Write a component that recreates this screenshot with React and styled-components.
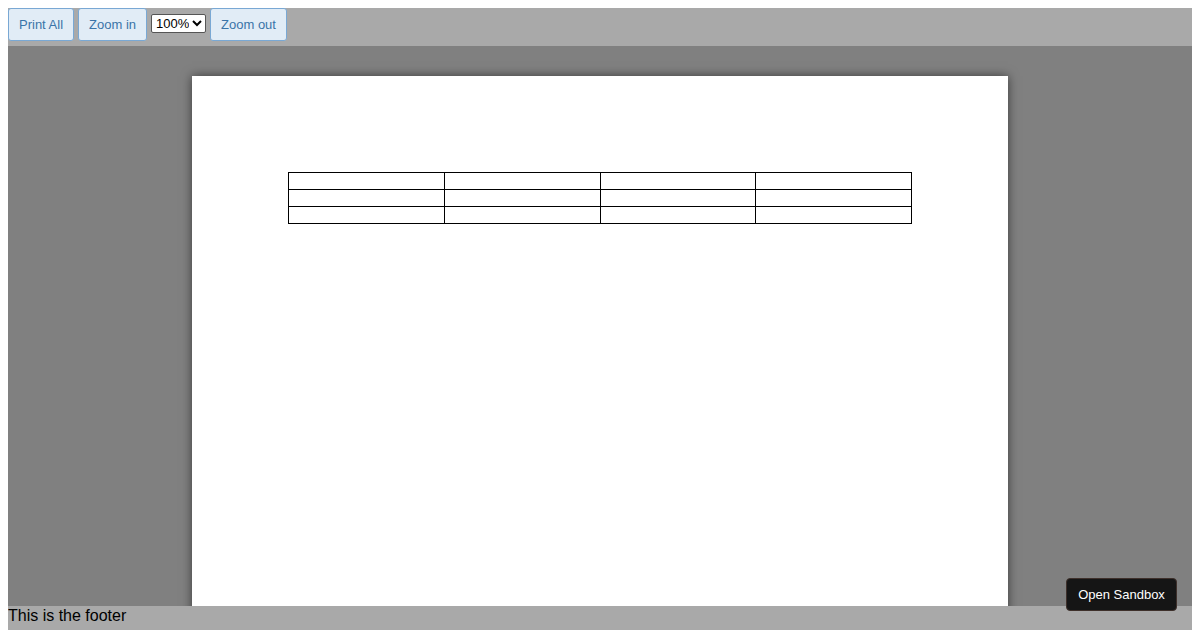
import React from "react";
import styled, { createGlobalStyle } from "styled-components";

const Global = createGlobalStyle`
  html, body { height: 100%; }
  body {
    margin: 8px 8px 0;
    font-family: "Liberation Sans", Arial, sans-serif;
    overflow: hidden;
  }
`;

const Layout = styled.div`
  height: calc(100vh - 8px);
  display: flex;
  flex-direction: column;
`;

const Toolbar = styled.div`
  height: 38px;
  flex-shrink: 0;
  background-color: #a9a9a9;
  display: flex;
  align-items: flex-start;
  gap: 4px;
`;

const Button = styled.button`
  height: 33px;
  padding: 0 10px;
  font-family: "Liberation Sans", Arial, sans-serif;
  font-size: 13px;
  color: #3a74a8;
  background-color: #e1ecf6;
  border: 1px solid #79a8d4;
  border-radius: 3px;
  cursor: pointer;
`;

const Select = styled.select`
  margin-top: 6px;
  height: 19px;
  width: 55px;
  font-family: "Liberation Sans", Arial, sans-serif;
  font-size: 13px;
  background: #fff;
  color: #000;
  border: 1px solid #555;
  border-radius: 2px;
  padding: 0;
`;

const Viewer = styled.div`
  flex: 1;
  background-color: #808080;
  overflow: hidden;
  padding-top: 30px;
`;

const Page = styled.div`
  width: 816px;
  min-height: 1056px;
  margin: 0 auto;
  background: #fff;
  box-shadow: 0 0 10px rgba(0, 0, 0, 0.55);
  padding: 96px;
  box-sizing: border-box;
`;

const Table = styled.table`
  width: 100%;
  border-collapse: collapse;
  table-layout: fixed;
`;

const Cell = styled.td`
  border: 1px solid #000;
  height: 16px;
  padding: 0;
`;

const Footer = styled.div`
  height: 24px;
  flex-shrink: 0;
  background-color: #a9a9a9;
  font-size: 16px;
  line-height: 20px;
  color: #000;
`;

const SandboxButton = styled.button`
  position: fixed;
  right: 23px;
  bottom: 19px;
  width: 111px;
  height: 33px;
  background: #151515;
  color: #fff;
  border: 1px solid #3e302b;
  border-radius: 4px;
  font-family: "Liberation Sans", Arial, sans-serif;
  font-size: 13px;
  cursor: pointer;
`;

const rows = [0, 1, 2];
const cols = [0, 1, 2, 3];

export default function App() {
  return (
    <Layout>
      <Global />
      <Toolbar>
        <Button>Print All</Button>
        <Button>Zoom in</Button>
        <Select defaultValue="100">
          <option value="50">50%</option>
          <option value="100">100%</option>
          <option value="150">150%</option>
        </Select>
        <Button>Zoom out</Button>
      </Toolbar>
      <Viewer>
        <Page>
          <Table>
            <tbody>
              {rows.map((r) => (
                <tr key={r}>
                  {cols.map((c) => (
                    <Cell key={c} />
                  ))}
                </tr>
              ))}
            </tbody>
          </Table>
        </Page>
      </Viewer>
      <Footer>This is the footer</Footer>
      <SandboxButton>Open Sandbox</SandboxButton>
    </Layout>
  );
}
